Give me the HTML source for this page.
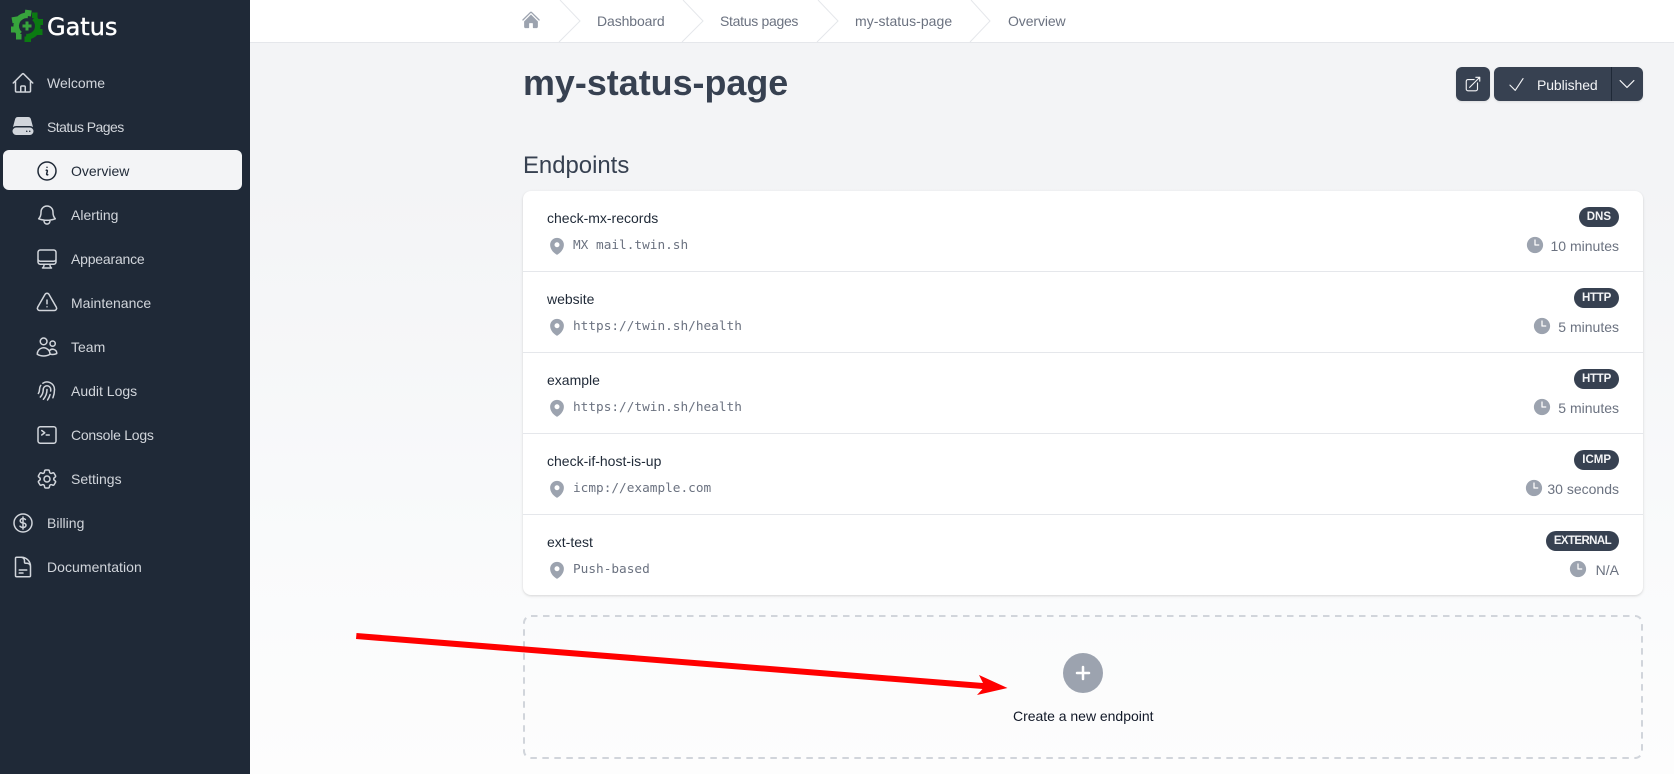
<!DOCTYPE html>
<html><head><meta charset="utf-8"><title>Gatus</title>
<style>
*{box-sizing:border-box;margin:0;padding:0}
html,body{width:1674px;height:774px;overflow:hidden;background:#fff;font-family:"Liberation Sans",sans-serif}
.abs,.t,svg.i{position:absolute}
.t{white-space:nowrap;line-height:20px}
#side{position:absolute;left:0;top:0;width:250px;height:774px;background:#1f2937}
#main{position:absolute;left:250px;top:0;width:1424px;height:774px;background:linear-gradient(#f3f4f6 0,#f3f4f6 180px,#f9fafb 540px,#fdfdfd 774px)}
#head{position:absolute;left:250px;top:0;width:1424px;height:43px;background:#fff;border-bottom:1px solid #e5e7eb}
.n{font-size:14px;color:#d1d5db;height:20px}
.ic{fill:none;stroke:#d1d5db;stroke-width:1.5;stroke-linecap:round;stroke-linejoin:round}
.bc{font-size:14px;color:#6b7280;top:11px}
#card{position:absolute;left:523px;top:191px;width:1120px;height:404px;background:#fff;border-radius:8px;box-shadow:0 1px 3px rgba(0,0,0,.1),0 1px 2px rgba(0,0,0,.06)}
.sep{position:absolute;left:523px;width:1120px;height:1px;background:#e5e7eb}
.name{left:547px;font-size:14px;color:#1f2937}
.mono{left:573px;font:12.75px/20px "DejaVu Sans Mono","Liberation Mono",monospace;color:#6b7280}
.badge{position:absolute;right:55px;height:20px;border-radius:10px;background:#374151;color:#f3f4f6;font-size:11.5px;font-weight:700;line-height:21px;padding:0 8px}
.time{right:55px;font-size:14px;color:#6b7280}
.btn{position:absolute;top:67px;height:34px;background:#374151;border-radius:6px;box-shadow:0 1px 2px rgba(0,0,0,.1)}
</style></head><body>
<div id="main"></div>
<div id="head"></div>
<div id="side"></div>

<!-- logo -->
<svg class="i" style="left:10px;top:9px" width="34" height="34" viewBox="0 0 34 34">
<g fill="none" stroke-width="5.500">
<path d="M18 6.500A10.500 10.500 0 0 0 10 25" stroke="#37a43c"/>
<path d="M16 27.500A10.500 10.500 0 0 0 24 9" stroke="#0b7a12"/>
</g>
<g fill="#37a43c"><rect x="13" y="1" width="6.500" height="6" transform="rotate(8 17 17)"/><rect x="2" y="8" width="6" height="6" transform="rotate(-10 4 11)"/><rect x="1" y="17.500" width="5.500" height="6"/><rect x="6" y="25" width="5.500" height="5.500"/></g>
<g fill="#0b7a12"><rect x="14.500" y="27.500" width="6.500" height="5.500"/><rect x="27" y="20" width="5.500" height="6"/><rect x="27.500" y="10" width="5.500" height="6"/><rect x="22" y="3.500" width="5.500" height="5.500"/></g>
<path d="M17 12.500v9M12.500 17h9" stroke="#37a43c" stroke-width="3" fill="none"/>
</svg>
<div class="t" style="left:47px;top:12px;font-family:'DejaVu Sans',sans-serif;font-size:24px;line-height:30px;color:#fff;-webkit-text-stroke:.4px #fff">Gatus</div>

<!-- active pill -->
<div class="abs" style="left:3px;top:150px;width:239px;height:40px;background:#f3f4f6;border-radius:6px"></div>

<!-- nav -->
<svg class="i ic" style="left:11px;top:71px" width="24" height="24" viewBox="0 0 24 24"><path d="M2.250 12l8.954-8.955c.44-.439 1.152-.439 1.591 0L21.750 12M4.500 9.750v10.125c0 .621.504 1.125 1.125 1.125H9.750v-4.875c0-.621.504-1.125 1.125-1.125h2.250c.621 0 1.125.504 1.125 1.125V21h4.125c.621 0 1.125-.504 1.125-1.125V9.750M8.250 21h8.250"/></svg>
<div class="t n" style="left:47px;top:73px">Welcome</div>

<svg class="i" style="left:11px;top:114px" width="24" height="24" viewBox="0 0 24 24" fill="#d1d5db"><path d="M4.080 5.227A3 3 0 016.979 3H17.020a3 3 0 012.900 2.227l2.113 7.926A5.228 5.228 0 0018.750 12H5.250a5.228 5.228 0 00-3.284 1.153L4.080 5.227z"/><path fill-rule="evenodd" d="M5.250 13.500a3.750 3.750 0 100 7.500h13.500a3.750 3.750 0 100-7.500H5.250zm10.500 4.500a.75.75 0 100-1.500.75.75 0 000 1.500zm3.750-.75a.75.75 0 11-1.500 0 .75.75 0 011.500 0z"/></svg>
<div class="t n" style="left:47px;top:117px;letter-spacing:-.55px">Status Pages</div>

<svg class="i ic" style="left:35px;top:159px;stroke:#1f2937" width="24" height="24" viewBox="0 0 24 24"><path d="M11.250 11.250l.041-.02a.75.75 0 011.063.852l-.708 2.836a.75.75 0 001.063.853l.041-.021M21 12a9 9 0 11-18 0 9 9 0 0118 0zm-9-3.750h.008v.008H12V8.250z"/></svg>
<div class="t n" style="left:71px;top:161px;color:#1f2937">Overview</div>

<svg class="i ic" style="left:35px;top:203px" width="24" height="24" viewBox="0 0 24 24"><path d="M14.857 17.082a23.848 23.848 0 005.454-1.310A8.967 8.967 0 0118 9.750v-.7V9A6 6 0 006 9v.75a8.967 8.967 0 01-2.312 6.022c1.733.64 3.560 1.085 5.455 1.310m5.714 0a24.255 24.255 0 01-5.714 0m5.714 0a3 3 0 11-5.714 0"/></svg>
<div class="t n" style="left:71px;top:205px">Alerting</div>

<svg class="i ic" style="left:35px;top:247px" width="24" height="24" viewBox="0 0 24 24"><path d="M9 17.250v1.007a3 3 0 01-.879 2.122L7.500 21h9l-.621-.621A3 3 0 0115 18.257V17.250m6-12V15a2.250 2.250 0 01-2.250 2.250H5.250A2.250 2.250 0 013 15V5.250m18 0A2.250 2.250 0 0018.750 3H5.250A2.250 2.250 0 003 5.250m18 0V12a2.250 2.250 0 01-2.250 2.250H5.250A2.250 2.250 0 013 12V5.250"/></svg>
<div class="t n" style="left:71px;top:249px;letter-spacing:-.2px">Appearance</div>

<svg class="i ic" style="left:35px;top:291px" width="24" height="24" viewBox="0 0 24 24"><path d="M12 9v3.750m-9.303 3.376c-.866 1.500.217 3.374 1.948 3.374h14.710c1.730 0 2.813-1.874 1.948-3.374L13.949 3.378c-.866-1.500-3.032-1.500-3.898 0L2.697 16.126zM12 15.750h.007v.008H12v-.008z"/></svg>
<div class="t n" style="left:71px;top:293px">Maintenance</div>

<svg class="i ic" style="left:35px;top:335px" width="24" height="24" viewBox="0 0 24 24"><path d="M15 19.128a9.380 9.380 0 002.625.372 9.337 9.337 0 004.121-.952 4.125 4.125 0 00-7.533-2.493M15 19.128v-.003c0-1.113-.285-2.160-.786-3.070M15 19.128v.106A12.318 12.318 0 018.624 21c-2.331 0-4.512-.645-6.374-1.766l-.001-.109a6.375 6.375 0 0111.964-3.070M12 6.375a3.375 3.375 0 11-6.750 0 3.375 3.375 0 016.750 0zm8.250 2.250a2.625 2.625 0 11-5.250 0 2.625 2.625 0 015.250 0z"/></svg>
<div class="t n" style="left:71px;top:337px">Team</div>

<svg class="i ic" style="left:35px;top:379px" width="24" height="24" viewBox="0 0 24 24"><path d="M7.864 4.243A7.500 7.500 0 0119.500 10.500c0 2.920-.556 5.709-1.568 8.268M5.742 6.364A7.465 7.465 0 004.500 10.500a7.464 7.464 0 01-1.150 3.993m1.989 3.559A11.209 11.209 0 008.250 10.500a3.750 3.750 0 117.500 0c0 .527-.021 1.049-.064 1.565M12 10.500a14.940 14.940 0 01-3.600 9.750m6.633-4.596a18.666 18.666 0 01-2.485 5.330"/></svg>
<div class="t n" style="left:71px;top:381px">Audit Logs</div>

<svg class="i ic" style="left:35px;top:423px" width="24" height="24" viewBox="0 0 24 24"><path d="M6.750 7.500l3 2.250-3 2.250m4.500 0h3m-9 8.250h13.500A2.250 2.250 0 0021 18V6a2.250 2.250 0 00-2.250-2.250H5.250A2.250 2.250 0 003 6v12a2.250 2.250 0 002.250 2.250z"/></svg>
<div class="t n" style="left:71px;top:425px;letter-spacing:-.25px">Console Logs</div>

<svg class="i ic" style="left:35px;top:467px" width="24" height="24" viewBox="0 0 24 24"><path d="M9.594 3.940c.09-.542.56-.94 1.110-.94h2.593c.55 0 1.020.398 1.110.94l.213 1.281c.063.374.313.686.645.87.074.04.147.083.22.127.324.196.72.257 1.075.124l1.217-.456a1.125 1.125 0 011.370.49l1.296 2.247a1.125 1.125 0 01-.26 1.431l-1.003.827c-.293.24-.438.613-.431.992a6.759 6.759 0 010 .255c-.007.378.138.75.43.99l1.005.828c.424.35.534.954.26 1.430l-1.298 2.247a1.125 1.125 0 01-1.369.491l-1.217-.456c-.355-.133-.75-.072-1.076.124a6.570 6.570 0 01-.22.128c-.331.183-.581.495-.644.869l-.213 1.280c-.09.543-.56.941-1.110.941h-2.594c-.55 0-1.020-.398-1.110-.94l-.213-1.281c-.062-.374-.312-.686-.644-.87a6.520 6.520 0 01-.22-.127c-.325-.196-.72-.257-1.076-.124l-1.217.456a1.125 1.125 0 01-1.369-.49l-1.297-2.247a1.125 1.125 0 01.26-1.431l1.004-.827c.292-.24.437-.613.43-.992a6.932 6.932 0 010-.255c.007-.378-.138-.75-.43-.99l-1.004-.828a1.125 1.125 0 01-.26-1.430l1.297-2.247a1.125 1.125 0 011.370-.491l1.216.456c.356.133.751.072 1.076-.124.072-.044.146-.087.22-.128.332-.183.582-.495.644-.869l.214-1.281z"/><path d="M15 12a3 3 0 11-6 0 3 3 0 016 0z"/></svg>
<div class="t n" style="left:71px;top:469px">Settings</div>

<svg class="i ic" style="left:11px;top:511px" width="24" height="24" viewBox="0 0 24 24"><path d="M12 6v12m-3-2.818l.879.659c1.171.879 3.070.879 4.242 0 1.172-.879 1.172-2.303 0-3.182C13.536 12.219 12.768 12 12 12c-.725 0-1.450-.22-2.003-.659-1.106-.879-1.106-2.303 0-3.182s2.900-.879 4.006 0l.415.33M21 12a9 9 0 11-18 0 9 9 0 0118 0z"/></svg>
<div class="t n" style="left:47px;top:513px">Billing</div>

<svg class="i ic" style="left:11px;top:555px" width="24" height="24" viewBox="0 0 24 24"><path d="M19.500 14.250v-2.625a3.375 3.375 0 00-3.375-3.375h-1.500A1.125 1.125 0 0113.500 7.125v-1.500a3.375 3.375 0 00-3.375-3.375H8.250m0 12.750h7.500m-7.500 3H12M10.500 2.250H5.625c-.621 0-1.125.504-1.125 1.125v17.250c0 .621.504 1.125 1.125 1.125h12.750c.621 0 1.125-.504 1.125-1.125V11.250a9 9 0 00-9-9z"/></svg>
<div class="t n" style="left:47px;top:557px;letter-spacing:.05px">Documentation</div>

<!-- breadcrumbs -->
<svg class="i" style="left:521px;top:10px" width="20" height="20" viewBox="0 0 24 24" fill="#9ca3af"><path d="M11.470 3.840a.75.75 0 011.060 0l8.690 8.690a.75.75 0 101.060-1.060l-8.689-8.690a2.250 2.250 0 00-3.182 0l-8.690 8.690a.75.75 0 001.061 1.060l8.690-8.690z"/><path d="M12 5.432l8.159 8.159c.03.03.06.058.091.086v6.198c0 1.035-.84 1.875-1.875 1.875H15a.75.75 0 01-.75-.75v-4.500a.75.75 0 00-.75-.75h-3a.75.75 0 00-.75.75V21a.75.75 0 01-.75.75H5.625a1.875 1.875 0 01-1.875-1.875v-6.198a2.290 2.290 0 00.091-.086L12 5.432z"/></svg>
<svg class="i" style="left:500px;top:0" width="600" height="43" fill="none" stroke="#e5e7eb" stroke-width="1"><path d="M60 0L80 21 59 42M183 0L203 21 182 42M318 0L338 21 317 42M471 0L490 21 470 42"/></svg>
<div class="t bc" style="left:597px;letter-spacing:-.1px">Dashboard</div>
<div class="t bc" style="left:720px;letter-spacing:-.3px">Status pages</div>
<div class="t bc" style="left:855px;letter-spacing:.05px">my-status-page</div>
<div class="t bc" style="left:1008px;letter-spacing:-.1px">Overview</div>

<!-- title -->
<div class="t" style="left:523px;top:62px;font-size:35.900px;line-height:42px;font-weight:700;color:#374151">my-status-page</div>
<div class="btn" style="left:1456px;width:34px"></div>
<svg class="i" style="left:1464px;top:75px;fill:none;stroke:#f3f4f6;stroke-width:1.5;stroke-linecap:round;stroke-linejoin:round" width="18" height="18" viewBox="0 0 24 24"><path d="M13.500 6H5.250A2.250 2.250 0 003 8.250v10.500A2.250 2.250 0 005.250 21h10.500A2.250 2.250 0 0018 18.750V10.500m-10.500 6L21 3m0 0h-5.250M21 3v5.250"/></svg>
<div class="btn" style="left:1494px;width:149px"></div>
<div class="abs" style="left:1611px;top:67px;width:1px;height:34px;background:#1f2937"></div>
<svg class="i" style="left:1506px;top:74px;fill:none;stroke:#f3f4f6;stroke-width:1.3;stroke-linecap:round;stroke-linejoin:round" width="21" height="21" viewBox="0 0 24 24"><path d="M4.500 12.750l6 6 9-13.500"/></svg>
<div class="t" style="left:1537px;top:75px;font-size:14px;letter-spacing:-.1px;color:#f3f4f6">Published</div>
<svg class="i" style="left:1616px;top:73px;fill:none;stroke:#f3f4f6;stroke-width:1.3;stroke-linecap:round;stroke-linejoin:round" width="22" height="22" viewBox="0 0 24 24"><path d="M19.500 8.250l-7.500 7.500-7.500-7.500"/></svg>

<div class="t" style="left:523px;top:151px;font-size:23.900px;line-height:30px;color:#374151">Endpoints</div>

<!-- card -->
<div id="card"></div>
<div class="sep" style="top:271px"></div><div class="sep" style="top:352px"></div><div class="sep" style="top:433px"></div><div class="sep" style="top:514px"></div>

<svg width="0" height="0" style="position:absolute"><defs>
<symbol id="pin" viewBox="0 0 24 24"><path fill="#9ca3af" fill-rule="evenodd" d="M11.540 22.351l.07.04.028.016a.76.76 0 00.723 0l.028-.015.071-.041a16.975 16.975 0 001.144-.742 19.580 19.580 0 002.683-2.282c1.944-1.990 3.963-4.980 3.963-8.827a8.250 8.250 0 00-16.500 0c0 3.846 2.020 6.837 3.963 8.827a19.580 19.580 0 002.682 2.282 16.975 16.975 0 001.145.742zM12 13.500a3 3 0 100-6 3 3 0 000 6z"/></symbol>
<symbol id="clk" viewBox="0 0 24 24"><path fill="#9ca3af" fill-rule="evenodd" d="M12 2.250c-5.385 0-9.750 4.365-9.750 9.750s4.365 9.750 9.750 9.750 9.750-4.365 9.750-9.750S17.385 2.250 12 2.250zM12.750 6a.75.75 0 00-1.500 0v6c0 .414.336.75.75.75h4.500a.75.75 0 000-1.500h-3.750V6z"/></symbol>
</defs></svg>

<div class="t name" style="top:208px">check-mx-records</div>
<svg class="i" style="left:547px;top:236px" width="20" height="20"><use href="#pin"/></svg>
<div class="t mono" style="top:236px">MX mail.twin.sh</div>
<div class="badge" style="top:207px">DNS</div>
<svg class="i" style="left:1525px;top:235px" width="20" height="20"><use href="#clk"/></svg>
<div class="t time" style="top:236px">10 minutes</div>

<div class="t name" style="top:289px">website</div>
<svg class="i" style="left:547px;top:317px" width="20" height="20"><use href="#pin"/></svg>
<div class="t mono" style="top:317px">https://twin.sh/health</div>
<div class="badge" style="top:288px;letter-spacing:-.25px">HTTP</div>
<svg class="i" style="left:1532px;top:316px" width="20" height="20"><use href="#clk"/></svg>
<div class="t time" style="top:317px">5 minutes</div>

<div class="t name" style="top:370px">example</div>
<svg class="i" style="left:547px;top:398px" width="20" height="20"><use href="#pin"/></svg>
<div class="t mono" style="top:398px">https://twin.sh/health</div>
<div class="badge" style="top:369px;letter-spacing:-.25px">HTTP</div>
<svg class="i" style="left:1532px;top:397px" width="20" height="20"><use href="#clk"/></svg>
<div class="t time" style="top:398px">5 minutes</div>

<div class="t name" style="top:451px">check-if-host-is-up</div>
<svg class="i" style="left:547px;top:479px" width="20" height="20"><use href="#pin"/></svg>
<div class="t mono" style="top:479px">icmp://example.com</div>
<div class="badge" style="top:450px">ICMP</div>
<svg class="i" style="left:1524px;top:478px" width="20" height="20"><use href="#clk"/></svg>
<div class="t time" style="top:479px">30 seconds</div>

<div class="t name" style="top:532px">ext-test</div>
<svg class="i" style="left:547px;top:560px" width="20" height="20"><use href="#pin"/></svg>
<div class="t mono" style="top:560px">Push-based</div>
<div class="badge" style="top:531px;letter-spacing:-.6px">EXTERNAL</div>
<svg class="i" style="left:1568px;top:559px" width="20" height="20"><use href="#clk"/></svg>
<div class="t time" style="top:560px">N/A</div>

<!-- new endpoint -->
<svg class="i" style="left:0;top:0" width="1674" height="774"><rect x="524" y="616" width="1118" height="142" rx="7" fill="none" stroke="#d1d5db" stroke-width="2" stroke-dasharray="6.500 5.500"/></svg>
<div class="abs" style="left:1063px;top:653px;width:40px;height:40px;border-radius:50%;background:#9ca3af"></div>
<svg class="i" style="left:1073px;top:663px" width="20" height="20" fill="none" stroke="#fff" stroke-width="2.500" stroke-linecap="round"><path d="M10 4v12M4 10h12"/></svg>
<div class="t" style="left:1013px;top:706px;font-size:14px;letter-spacing:-.02px;color:#111827">Create a new endpoint</div>

<!-- arrow -->
<svg class="i" style="left:0;top:0" width="1674" height="774"><path d="M356.500 633L983 683 979 675 1007.500 688 977 695 982.500 689 356 639Z" fill="#ff0000"/></svg>
</body></html>
